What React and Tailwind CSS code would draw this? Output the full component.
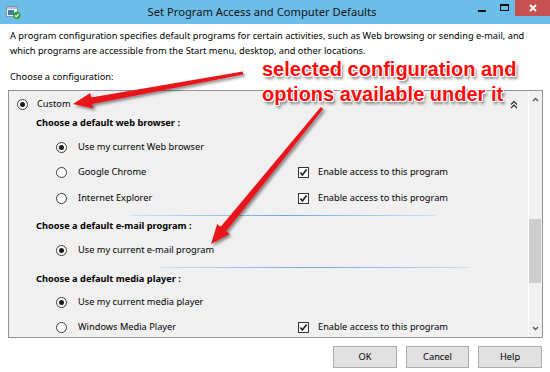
import React from "react";

const Radio = ({ checked }) => (
  <span className="w-[11px] h-[11px] rounded-full border border-[#3c3c3c] bg-white flex items-center justify-center shrink-0">
    {checked && <span className="w-[5px] h-[5px] rounded-full bg-[#1a1a1a]" />}
  </span>
);

const Checkbox = () => (
  <span className="w-[11px] h-[11px] border border-[#333] bg-white flex items-center justify-center shrink-0">
    <svg width="9" height="9" viewBox="0 0 9 9">
      <path d="M1.4 4.6 L3.4 6.9 L7.6 1.6" stroke="#1a1a1a" strokeWidth="1.6" fill="none" />
    </svg>
  </span>
);

const Item = ({ label, checked, access, mt }) => (
  <div className={"flex items-center h-[16px] pl-[47px] " + mt}>
    <div className="w-[242px] flex items-center gap-[11px]">
      <Radio checked={checked} />
      <span>{label}</span>
    </div>
    {access && (
      <div className="flex items-center gap-[9px]">
        <Checkbox />
        <span>Enable access to this program</span>
      </div>
    )}
  </div>
);

const Heading = ({ children, mt }) => (
  <div className={"flex items-center h-[16px] pl-[27px] font-bold " + mt}>{children}</div>
);

export default function App() {
  return (
    <div className="w-[550px] h-[372px] relative overflow-hidden bg-white text-black font-['Noto_Sans',sans-serif] text-[9.25px]">
      {/* Title bar */}
      <div className="h-[24px] bg-[#6dbde9] flex items-start">
        <div className="w-[54px] h-[24px] flex items-center pl-[6px]">
          <svg width="15" height="14" viewBox="0 0 15 14">
            <rect x="0.5" y="1.5" width="11" height="10" fill="#eef2f7" stroke="#8094ad" />
            <rect x="1" y="2" width="10" height="2" fill="#a9bfdc" />
            <rect x="2" y="5" width="6" height="5" fill="#3d7fa6" />
            <circle cx="10.8" cy="10.3" r="3.6" fill="#2e9e33" />
            <path d="M9 10.4 L10.3 11.7 L12.6 9.1" stroke="#fff" strokeWidth="1.3" fill="none" />
          </svg>
        </div>
        <div className="flex-1 h-[24px] flex items-center justify-center text-[11.2px] text-[#111]">
          Set Program Access and Computer Defaults
        </div>
        <div className="flex items-start h-[16px]">
          <div className="w-[24px] h-[16px] flex items-center justify-center">
            <span className="w-[8px] h-[2px] bg-[#111] mt-[5px]" />
          </div>
          <div className="w-[21px] h-[16px] flex items-center justify-center">
            <span className="w-[9px] h-[7px] border border-[#111] border-t-2 mb-[1px]" />
          </div>
          <div className="w-[35px] h-[16px] bg-[#c75050] flex items-center justify-center">
            <svg width="8" height="8" viewBox="0 0 8 8">
              <path d="M1 1 L7 7 M7 1 L1 7" stroke="#fff" strokeWidth="1.8" />
            </svg>
          </div>
        </div>
      </div>

      {/* Body */}
      <div className="px-[8px]">
        <div className="pl-[2px] pt-[4px] leading-[15px]">
          <div>A program configuration specifies default programs for certain activities, such as Web browsing or sending e-mail, and</div>
          <div>which programs are accessible from the Start menu, desktop, and other locations.</div>
        </div>
        <div className="pl-[2px] mt-[11px] leading-[15px]">Choose a configuration:</div>

        {/* List box */}
        <div className="mt-[6px] h-[248px] w-[535px] border border-[#8f949b] flex">
          <div className="flex-1 bg-[#f0f0f0] overflow-hidden">
            <div className="mt-[5px] h-[16px] flex items-center justify-between pl-[8px] pr-[10px]">
              <div className="flex items-center gap-[9px]">
                <Radio checked />
                <span>Custom</span>
              </div>
              <svg width="8" height="9" viewBox="0 0 8 9">
                <path d="M1 4.5 L4 1.5 L7 4.5 M1 8 L4 5 L7 8" stroke="#222" strokeWidth="1.1" fill="none" />
              </svg>
            </div>
            <Heading mt="mt-[3px]">Choose a default web browser :</Heading>
            <Item mt="mt-[8px]" label="Use my current Web browser" checked />
            <Item mt="mt-[9px]" label="Google Chrome" access />
            <Item mt="mt-[10px]" label="Internet Explorer" access />
            <div className="mt-[9px] ml-[121px] w-[305px] h-[1px] bg-linear-to-r from-[#cfe2f5] via-[#6fa6df] to-[#c9e0f6]" />
            <Heading mt="mt-[2px]">Choose a default e-mail program :</Heading>
            <Item mt="mt-[8px]" label="Use my current e-mail program" checked />
            <div className="mt-[9px] ml-[151px] w-[308px] h-[1px] bg-linear-to-r from-[#cfe2f5] via-[#6fa6df] to-[#c9e0f6]" />
            <Heading mt="mt-[3px]">Choose a default media player :</Heading>
            <Item mt="mt-[7px]" label="Use my current media player" checked />
            <Item mt="mt-[9px]" label="Windows Media Player" access />
          </div>
          <div className="w-[1px] bg-white" />
          <div className="w-[13px] bg-[#f0f0f0] flex flex-col">
            <div className="h-[17px] flex items-center justify-center">
              <svg width="7" height="5" viewBox="0 0 7 5">
                <path d="M1 4 L3.5 1.5 L6 4" stroke="#555" strokeWidth="1.3" fill="none" />
              </svg>
            </div>
            <div className="flex-1">
              <div className="mt-[111px] h-[64px] w-[12px] bg-[#cdcdcd]" />
            </div>
            <div className="h-[17px] flex items-center justify-center">
              <svg width="7" height="5" viewBox="0 0 7 5">
                <path d="M1 1 L3.5 3.5 L6 1" stroke="#555" strokeWidth="1.3" fill="none" />
              </svg>
            </div>
          </div>
        </div>

        {/* Buttons */}
        <div className="mt-[8px] flex justify-end gap-[9px]">
          <div className="w-[64px] h-[22px] border border-[#adadad] bg-[#e1e1e1] flex items-center justify-center">OK</div>
          <div className="w-[63px] h-[22px] border border-[#adadad] bg-[#e1e1e1] flex items-center justify-center">Cancel</div>
          <div className="w-[64px] h-[22px] border border-[#adadad] bg-[#e1e1e1] flex items-center justify-center">Help</div>
        </div>
      </div>

      {/* Annotation arrows */}
      <svg className="absolute left-0 top-0 pointer-events-none" width="550" height="372" viewBox="0 0 550 372">
        <defs>
          <filter id="sh" x="-20%" y="-20%" width="140%" height="140%">
            <feDropShadow dx="2" dy="2" stdDeviation="1.4" floodColor="#000" floodOpacity="0.45" />
          </filter>
        </defs>
        <polygon
          filter="url(#sh)"
          fill="#e8161b"
          points="242.7,71.5 91.1,97.5 90.2,92.9 73,104 93.2,108.6 92.3,104.0 243.3,74.5"
        />
        <polygon
          filter="url(#sh)"
          fill="#e8161b"
          points="320.8,107.1 220.7,226.8 217.2,224.0 211,244 229.7,234.1 226.2,231.2 323.2,109.0"
        />
      </svg>

      {/* Annotation text */}
      <div className="absolute left-[262px] top-[57px] font-['Liberation_Sans',sans-serif] font-bold text-[20px] leading-[25px] text-[#ff0a0a] [text-shadow:-1px_-1px_0_#fff,1px_-1px_0_#fff,-1px_1px_0_#fff,1px_1px_0_#fff,0_-1px_0_#fff,0_1px_0_#fff,2px_3px_3px_rgba(0,0,0,0.55)]">
        <div>selected configuration and</div>
        <div>options available under it</div>
      </div>
    </div>
  );
}
